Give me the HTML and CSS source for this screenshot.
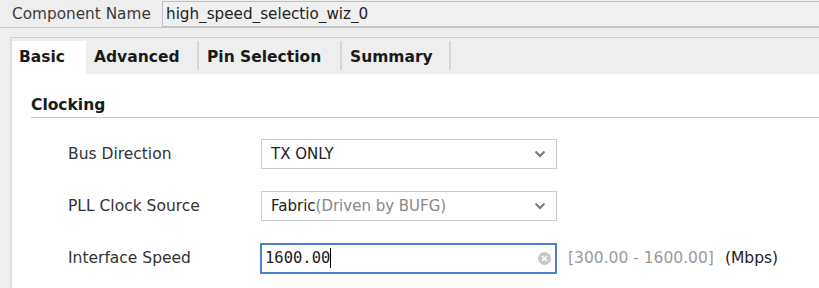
FILE: index.html
```html
<!DOCTYPE html>
<html lang="en">
<head>
  <meta charset="UTF-8" />
  <title>high_speed_selectio_wiz_0</title>
  <link rel="stylesheet" href="styles.css">
</head>
<body>

  <!-- Component name -->
  <div class="name-row">
    <span class="name-label">Component Name</span>
    <input class="name-input" type="text" value="high_speed_selectio_wiz_0" readonly />
  </div>

  <div class="panel">
    <!-- Tabs -->
    <div class="tabs">
      <div class="tab active">Basic</div>
      <div class="tab">Advanced</div>
      <div class="tab">Pin Selection</div>
      <div class="tab">Summary</div>
    </div>

    <!-- Basic page -->
    <div class="page">
      <div class="group-title">Clocking</div>

      <div class="field">
        <div class="field-label">Bus Direction</div>
        <div class="select">
          <span>TX ONLY</span>
          <svg class="chevron" width="12" height="8" viewBox="0 0 12 8"><path d="M1.5 1.5 L6 6 L10.5 1.5" fill="none" stroke="#777" stroke-width="2"/></svg>
        </div>
      </div>

      <div class="field">
        <div class="field-label">PLL Clock Source</div>
        <div class="select">
          <span>Fabric<span class="hint">(Driven by BUFG)</span></span>
          <svg class="chevron" width="12" height="8" viewBox="0 0 12 8"><path d="M1.5 1.5 L6 6 L10.5 1.5" fill="none" stroke="#777" stroke-width="2"/></svg>
        </div>
      </div>

      <div class="field">
        <div class="field-label">Interface Speed</div>
        <div class="text-box focused">
          <span class="value">1600.00</span><span class="caret"></span>
          <svg class="clear" width="13" height="13" viewBox="0 0 13 13"><circle cx="6.5" cy="6.5" r="6.5" fill="#c8c8c8"/><path d="M4 4 L9 9 M9 4 L4 9" stroke="#fff" stroke-width="1.6"/></svg>
        </div>
        <span class="range">[300.00 - 1600.00]</span>
        <span class="unit">(Mbps)</span>
      </div>
    </div>
  </div>

</body>
</html>
```

FILE: styles.css
```css
body {
  margin: 0;
  background: #eeeeee;
  font-family: "DejaVu Sans", Verdana, sans-serif;
  font-size: 15.5px;
  color: #333;
  width: 819px;
  height: 288px;
  overflow: hidden;
}

.name-row {
  display: flex;
  align-items: center;
  height: 27px;
  padding-left: 12px;
  border-bottom: 1px solid #c8c8c8;
}

.name-label {
  width: 150px;
  font-size: 15.3px;
  color: #3a3a3a;
}

.name-input {
  flex: 1;
  height: 26px;
  margin: 1px -4px 0 0;
  box-sizing: border-box;
  border: 1px solid #c0c0c0;
  border-right: none;
  background: #f0f0f0;
  font-family: "DejaVu Sans", Verdana, sans-serif;
  font-size: 15.2px;
  color: #222;
  padding: 0 3px;
  outline: none;
}

.panel {
  margin-top: 9px;
  margin-left: 10px;
  border-top: 1px solid #cfcfcf;
  border-left: 2px solid #dcdcdc;
  background: #f7f7f7;
}

.tabs {
  display: flex;
  height: 36px;
  padding-top: 3px;
  box-sizing: border-box;
  background: #eeeeee;
}

.tab {
  display: flex;
  align-items: center;
  padding: 2px 8px 0;
  font-weight: bold;
  color: #1a1a1a;
  border-right: 2px solid #d6d6d6;
  margin: 0 0 4px 0;
  white-space: nowrap;
}

.tab.active {
  background: #fff;
  border-right: none;
  margin: 0;
  width: 59px;
  padding-left: 7px;
  padding-bottom: 4px;
  box-sizing: content-box;
}

.tab:nth-child(2) { width: 95px; }
.tab:nth-child(3) { width: 125px; }
.tab:nth-child(4) { width: 91px; }

.page {
  background: #fff;
  height: 214px;
  padding: 22px 0 0 19px;
  box-sizing: border-box;
}

.group-title {
  font-weight: bold;
  color: #1a1a1a;
  padding-bottom: 3px;
  border-bottom: 1px solid #c8c8c8;
  margin-bottom: 21px;
}

.field {
  display: flex;
  align-items: center;
  margin-left: 37px;
  height: 30px;
  margin-bottom: 22px;
}

.field-label {
  width: 193px;
  color: #333;
}

.select {
  width: 296px;
  height: 30px;
  box-sizing: border-box;
  border: 1px solid #cccccc;
  display: flex;
  align-items: center;
  justify-content: space-between;
  padding: 0 10px 0 9px;
  font-size: 15px;
  color: #222;
}

.hint {
  color: #888;
}

.text-box {
  width: 297px;
  height: 31px;
  margin-left: -1px;
  box-sizing: border-box;
  border: 2px solid #4a7fd6;
  display: flex;
  align-items: center;
  padding: 0 4px 0 3px;
  font-family: "DejaVu Sans Mono", monospace;
  font-size: 15.5px;
  color: #222;
}

.caret {
  display: inline-block;
  width: 1px;
  height: 20px;
  background: #000;
}

.clear {
  margin-left: auto;
}

.range {
  margin-left: 11px;
  color: #9a9a9a;
}

.unit {
  margin-left: 11px;
  color: #222;
}
```
